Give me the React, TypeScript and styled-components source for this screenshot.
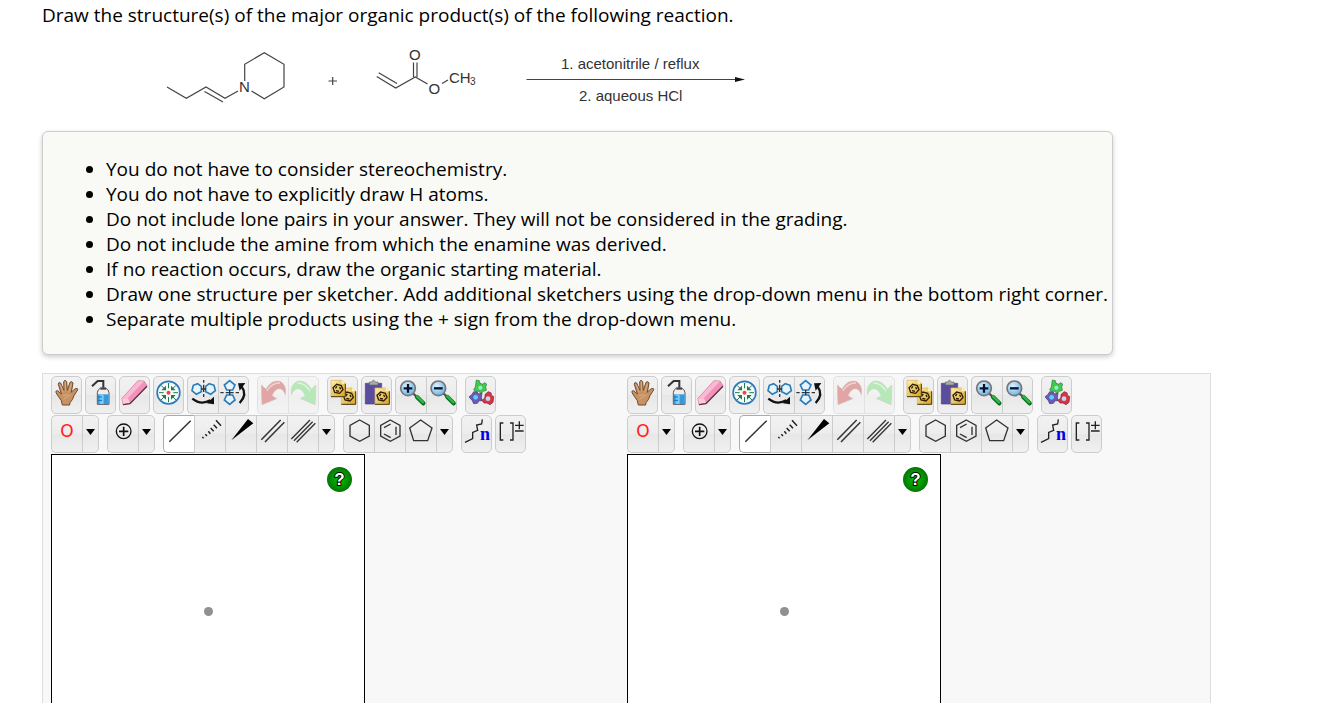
import React from "react";
import styled, { createGlobalStyle, css } from "styled-components";

const GlobalStyle = createGlobalStyle`
  *, *::before, *::after { box-sizing: border-box; }
  body { margin: 0; background: #fff; color: #000; font: 19px/25px "Open Sans", sans-serif; }
`;

const Page = styled.main`
  padding: 3px 112px 0 42px;
`;

const Prompt = styled.p`
  margin: 0;
`;

const Reaction = styled.figure`
  margin: 16px 0 23px 118px;

  svg {
    display: block;
    max-width: 100%;
  }
`;

const Notes = styled.ul`
  width: fit-content;
  max-width: 100%;
  margin: 0 0 18px;
  padding: 25px 4px 22px 63px;
  border: 1px solid #ccc;
  border-radius: 6px;
  background: #f9faf5;
  box-shadow: 0 2px 5px rgba(0, 0, 0, 0.2);
`;

const Workspace = styled.section`
  display: grid;
  grid-template-columns: repeat(2, 1fr);
  padding: 2px 7px 8px 8px;
  border: 1px solid #ddd;
  background: #f8f8f8;
`;

const Sketcher = styled.div`
  min-width: 0;
`;

const Toolbar = styled.div`
  display: flex;
  margin-bottom: 1px;
`;

const Group = styled.div<{ $spaced?: boolean; $disabled?: boolean }>`
  display: flex;
  flex: none;
  height: 38px;
  margin-right: ${(p) => (p.$spaced ? 8 : 3)}px;
  opacity: ${(p) => (p.$disabled ? 0.5 : 1)};
`;

const Tool = styled.button<{ $active?: boolean; $narrow?: boolean }>`
  display: flex;
  justify-content: center;
  flex: none;
  width: ${(p) => (p.$narrow ? 17 : 31)}px;
  height: 38px;
  padding: 3px 0 0;
  border: 1px solid #ccc;
  border-right-width: 0;
  background: linear-gradient(#f2f2f2, #ececec 50%, #e7e7e7 51%, #f0f0f0);
  color: #000;

  &:first-child {
    border-radius: 5px 0 0 5px;
  }
  &:last-child {
    border-right-width: 1px;
    border-radius: 0 5px 5px 0;
  }
  &:only-child {
    border-radius: 5px;
  }
  ${(p) =>
    p.$active &&
    css`
      background: #fff;
      border-color: #aaa;
    `}

  svg {
    display: block;
    flex: none;
  }
`;

const ElementSymbol = styled.span`
  color: #f22;
  font: 17px/25px "DejaVu Sans", sans-serif;
`;

const Canvas = styled.div`
  position: relative;
  display: flex;
  align-items: center;
  justify-content: center;
  width: 314px;
  max-width: 100%;
  aspect-ratio: 1;
  border: 1px solid #000;
  background: #fff;
`;

const Atom = styled.span`
  width: 9px;
  height: 9px;
  border-radius: 50%;
  background: #909090;
`;

const Help = styled.button`
  position: absolute;
  top: 12px;
  right: 12px;
  padding: 0;
  border: 0;
  background: none;

  svg {
    display: block;
  }
`;

function Icon({ x, y = 15, children }: { x: number; y?: number; children: React.ReactNode }) {
  return (
    <svg width="25" height="25" viewBox={`${x} ${y} 75 75`} fill="none" aria-hidden="true" overflow="visible">
      {children}
    </svg>
  );
}

const Caret = () => (
  <svg width="9" height="25" viewBox="0 0 9 25" aria-hidden="true">
    <path d="M0 10h9l-4.5 6z" fill="#000" />
  </svg>
);

const GoldPage = ({ x, y }: { x: number; y: number }) => (
  <g transform={`translate(${x} ${y})`}>
    <path d="M2 2H34L45 12V51H2Z" fill="url(#gold)" stroke="#d8b65a" strokeWidth="2" />
    <path d="M34 2V12H45Z" fill="#fff6c8" />
    <path d="M45 12V51H2" stroke="#4a3a10" strokeWidth="3" />
    <path d="M8 24L19 14L33 18L38 30L28 41L13 38Z" stroke="#2b2000" strokeWidth="4" />
    <path d="M15 26L20 20M28 22L31 29M26 35L17 33" stroke="#2b2000" strokeWidth="4" />
  </g>
);

const Lens = ({ cx }: { cx: number }) => (
  <>
    <path d={`M${cx + 15} 55L${cx + 27} 66`} stroke="#555" strokeWidth="7" />
    <path d={`M${cx + 27} 66L${cx + 46} 85`} stroke="#0c6b20" strokeWidth="13" strokeLinecap="round" />
    <path d={`M${cx + 27} 64L${cx + 45} 82`} stroke="#35b54a" strokeWidth="7" strokeLinecap="round" />
    <circle cx={cx} cy="40" r="22" fill="url(#lens)" stroke="#777" strokeWidth="5" />
  </>
);

const hand = (
  <Icon x={9}>
    <path
      d="M34 90L31 77Q23 66 15 53Q13 46 20 47L31 57L22 28Q22 20 29 24L39 47L38 20Q42 12 47 20L49 46L57 22Q63 17 66 24L61 52L71 42Q79 38 81 43L69 62Q65 75 57 83L56 90Z"
      fill="#c69264" stroke="#6e4a2b" strokeWidth="3" strokeLinejoin="round"
    />
    <path d="M36 62Q46 56 58 62M38 73Q45 64 52 66M28 29L37 51M43 20V49M61 26L54 49" stroke="#dcae84" strokeWidth="3" />
  </Icon>
);

const bottle = (
  <Icon x={112}>
    <path d="M124 34L141 18H158V38" stroke="#333" strokeWidth="6" />
    <path d="M149 39H165Q175 45 175 53V88H140V53Q140 45 149 39Z" fill="#f3eaea" stroke="#555" strokeWidth="3" />
    <path d="M141 58H174V87H141Z" fill="#2f9be0" />
    <path d="M147 58H159V87H147Z" fill="#7cc8f5" />
    <path d="M141 66H154M141 76H154" stroke="#1668ad" strokeWidth="3" />
    <path d="M149 38H166V44H149Z" fill="#444" />
  </Icon>
);

const eraser = (
  <Icon x={214}>
    <path d="M214 70L262 17L280 18L289 32L238 84L217 89Z" fill="#f291bb" stroke="#c27298" strokeWidth="2" />
    <path d="M216 69L263 18L280 19L232 69Z" fill="#fbb9d5" />
    <path d="M215 70L232 70L238 84L217 88Z" fill="#ffc9de" />
    <path d="M217 89L238 86L289 34" stroke="#5d2b43" strokeWidth="4" />
  </Icon>
);

const clean = (
  <Icon x={16}>
    <circle cx="53.5" cy="53" r="34" fill="#f4fafc" stroke="#2a7ab5" strokeWidth="5" />
    <path
      d="M53.5 24V40M53.5 82V66M25 53H39M82 53H68M31 31L45 45M76 31L62 45M31 75L45 61M76 75L62 61"
      stroke="#267a45" strokeWidth="3"
    />
    <path d="M46 32V46H32ZM61 32V46H75ZM46 74V60H32ZM61 74V60H75Z" fill="#267a45" />
    <circle cx="53.5" cy="53" r="6" fill="#f04444" />
  </Icon>
);

const flipHorizontal = (
  <Icon x={120}>
    <path d="M151 34V50L136 58L123 47L127 31L140 26Z M164 34V50L179 58L193 47L189 31L175 26Z" fill="#e8f4fc" stroke="#2b7cb9" strokeWidth="5" />
    <path d="M158 15V23M158 29V51M158 57V66M151 42H165" stroke="#333" strokeWidth="4" />
    <path d="M124 71Q150 92 178 76" stroke="#111" strokeWidth="7" />
    <path d="M189 65V88L167 85Z" fill="#111" />
  </Icon>
);

const flipVertical = (
  <Icon x={212}>
    <path d="M229 45H247L254 30L238 17L222 30Z M229 60H247L254 75L238 88L222 75Z" fill="#e8f4fc" stroke="#2b7cb9" strokeWidth="5" />
    <path d="M210 53H220M226 53H250M256 53H266M238 45V60" stroke="#333" strokeWidth="4" />
    <path d="M268 84Q292 59 274 35" stroke="#111" strokeWidth="7" />
    <path d="M263 25L285 24L268 47Z" fill="#111" />
  </Icon>
);

const undo = (
  <Icon x={33} y={30}>
    <path d="M34 45L48 58Q64 29 90 34Q111 44 106 74Q98 52 82 57Q71 63 66 77L80 86L36 104Z" fill="#c95452" stroke="#b98080" strokeWidth="2" />
    <path d="M50 63Q66 38 90 39" stroke="#eab0a8" strokeWidth="4" />
  </Icon>
);

const redo = (
  <Icon x={127} y={30}>
    <path d="M202 45L188 58Q172 29 146 34Q125 44 128 74Q138 52 154 57Q165 63 170 77L156 86L199 104Z" fill="#78d978" stroke="#8fba8f" strokeWidth="2" />
    <path d="M184 63Q168 38 146 39" stroke="#c4f4c0" strokeWidth="4" />
  </Icon>
);

const copy = (
  <Icon x={16}>
    <defs>
      <linearGradient id="gold" x1="0" y1="0" x2="1" y2="1">
        <stop stopColor="#fff0b0" />
        <stop offset="1" stopColor="#d9a020" />
      </linearGradient>
      <radialGradient id="lens" cx=".4" cy=".35" r=".7">
        <stop stopColor="#e0f4ff" />
        <stop offset="1" stopColor="#66aee6" />
      </radialGradient>
    </defs>
    <GoldPage x={48} y={37} />
    <GoldPage x={17} y={14} />
  </Icon>
);

const paste = (
  <Icon x={118}>
    <path d="M122 25H171V87H122Z" fill="#5b4d9e" stroke="#4a4088" strokeWidth="2" />
    <path d="M134 30V21H141Q146 10 152 21H160V30Z" fill="#aaa" stroke="#666" strokeWidth="2" />
    <GoldPage x={149} y={37} />
  </Icon>
);

const zoomIn = (
  <Icon x={220}>
    <Lens cx={247} />
    <path d="M247 27V53M234 40H260" stroke="#05162c" strokeWidth="7" />
  </Icon>
);

const zoomOut = (
  <Icon x={312}>
    <Lens cx={340} />
    <path d="M327 40H353" stroke="#05162c" strokeWidth="7" />
  </Icon>
);

const templates = (
  <Icon x={430}>
    <path d="M455 15L464 17L466 25L475 28L479 23L486 27L483 36L485 46L476 49L470 55L461 49L452 49L447 44L452 36Z" fill="#46c850" stroke="#1d7a31" strokeWidth="2" />
    <path d="M433 66L443 57L447 50L457 51L463 57L472 54L470 67L473 77L464 77L458 85L447 86L443 77Z" fill="#6a5cb4" stroke="#3f3480" strokeWidth="2" />
    <path d="M482 57L491 50L500 54L499 60L507 65L505 82L496 89L487 84L478 84L472 76L480 70Z" fill="#d93440" stroke="#861624" strokeWidth="2" />
    <circle cx="467" cy="38" r="6" fill="#8ff0d8" />
    <circle cx="453" cy="67" r="7" fill="#65caff" />
    <circle cx="490" cy="71" r="7" fill="#b9dcf5" />
  </Icon>
);

const charge = (
  <Icon x={214} y={149}>
    <circle cx="252" cy="186" r="22" stroke="#111" strokeWidth="4" />
    <path d="M252 172V200M238 186H266" stroke="#111" strokeWidth="5" />
  </Icon>
);

const singleBond = (
  <Icon x={381} y={149}>
    <path d="M388 217L452 154" stroke="#333" strokeWidth="4.5" />
  </Icon>
);

const hashedBond = (
  <Icon x={476} y={149}>
    <path d="M489 203L493 207M498 195L503 200M507 186L513 193M514 176L523 186M523 166L533 177M530 153L545 169" stroke="#222" strokeWidth="4.5" />
  </Icon>
);

const wedgeBond = (
  <Icon x={567} y={149}>
    <path d="M574 213L624 149L640 162Z" fill="#000" />
  </Icon>
);

const doubleBond = (
  <Icon x={30} y={149}>
    <path d="M34 211L92 152M45 218L103 159" stroke="#333" strokeWidth="4.5" />
  </Icon>
);

const tripleBond = (
  <Icon x={122} y={149}>
    <path d="M123 209L179 152M131 214L187 157M139 219L195 162" stroke="#333" strokeWidth="4" />
  </Icon>
);

const hexagon = (
  <Icon x={291} y={149}>
    <path d="M329 152L358 168V200L329 216L300 200V168Z" stroke="#333" strokeWidth="4" />
  </Icon>
);

const benzene = (
  <Icon x={384} y={149}>
    <path d="M421 152L450 168V200L421 216L392 200V168Z M438 172V197M402 175L422 164M402 194L422 205" stroke="#333" strokeWidth="4" />
  </Icon>
);

const pentagon = (
  <Icon x={476} y={149}>
    <path d="M511 152L545 176L532 214H490L478 176Z" stroke="#333" strokeWidth="4" />
  </Icon>
);

const chain = (
  <Icon x={642} y={149}>
    <path d="M697 150L695 164L680 167L683 183L668 189V208L645 219" stroke="#222" strokeWidth="4" />
    <text x="690" y="213" fill="#0000e8" fontFamily="Liberation Serif, serif" fontWeight="700" fontSize="54">n</text>
  </Icon>
);

const bracket = (
  <Icon x={746} y={149}>
    <path d="M762 161H753V212H762M782 161H791V212H782" stroke="#222" strokeWidth="4" />
    <path d="M810 156V180M797 168H823M797 185H823" stroke="#222" strokeWidth="4" />
  </Icon>
);

type ToolSpec = { label: string; icon?: React.ReactNode; narrow?: boolean; active?: boolean };
type GroupSpec = { tools: ToolSpec[]; spaced?: boolean; disabled?: boolean };

const menu = (label: string): ToolSpec => ({ label, icon: <Caret />, narrow: true });

const topGroups: GroupSpec[] = [
  { tools: [{ label: "Move", icon: hand }] },
  { tools: [{ label: "Clear", icon: bottle }] },
  { tools: [{ label: "Erase", icon: eraser }] },
  { tools: [{ label: "Clean structure", icon: clean }] },
  { spaced: true, tools: [{ label: "Flip horizontally", icon: flipHorizontal }, { label: "Flip vertically", icon: flipVertical }] },
  { spaced: true, disabled: true, tools: [{ label: "Undo", icon: undo }, { label: "Redo", icon: redo }] },
  { tools: [{ label: "Copy", icon: copy }] },
  { tools: [{ label: "Paste", icon: paste }] },
  { spaced: true, tools: [{ label: "Zoom in", icon: zoomIn }, { label: "Zoom out", icon: zoomOut }] },
  { tools: [{ label: "Templates", icon: templates }] },
];

const bottomGroups: GroupSpec[] = [
  { spaced: true, tools: [{ label: "Oxygen", icon: <ElementSymbol>O</ElementSymbol> }, menu("More elements")] },
  { spaced: true, tools: [{ label: "Charge", icon: charge }, menu("More charges")] },
  {
    spaced: true,
    tools: [
      { label: "Single bond", icon: singleBond, active: true },
      { label: "Hashed bond", icon: hashedBond },
      { label: "Wedge bond", icon: wedgeBond },
      { label: "Double bond", icon: doubleBond },
      { label: "Triple bond", icon: tripleBond },
      menu("More bonds"),
    ],
  },
  {
    spaced: true,
    tools: [
      { label: "Cyclohexane", icon: hexagon },
      { label: "Benzene", icon: benzene },
      { label: "Cyclopentane", icon: pentagon },
      menu("More rings"),
    ],
  },
  { tools: [{ label: "Chain", icon: chain }] },
  { tools: [{ label: "Brackets", icon: bracket }] },
];

function ToolRow({ label, groups }: { label: string; groups: GroupSpec[] }) {
  return (
    <Toolbar role="toolbar" aria-label={label}>
      {groups.map((group) => (
        <Group key={group.tools[0].label} $spaced={group.spaced} $disabled={group.disabled}>
          {group.tools.map((tool) => (
            <Tool
              key={tool.label}
              type="button"
              aria-label={tool.label}
              disabled={group.disabled}
              $narrow={tool.narrow}
              $active={tool.active}
            >
              {tool.icon}
            </Tool>
          ))}
        </Group>
      ))}
    </Toolbar>
  );
}

function SketcherPanel() {
  return (
    <Sketcher>
      <ToolRow label="Editing tools" groups={topGroups} />
      <ToolRow label="Drawing tools" groups={bottomGroups} />
      <Canvas>
        <Help type="button" aria-label="Help">
          <svg width="25" height="25" viewBox="0 0 25 25" aria-hidden="true">
            <defs>
              <radialGradient id="help">
                <stop stopColor="#00c800" />
                <stop offset="1" stopColor="#057505" />
              </radialGradient>
            </defs>
            <circle cx="12.5" cy="12.5" r="12.5" fill="url(#help)" />
            <text
              x="12.5" y="18" textAnchor="middle" fontFamily="Liberation Sans, sans-serif" fontWeight="700"
              fontSize="17" fill="#fff" stroke="#000" strokeWidth="2" paintOrder="stroke"
            >
              ?
            </text>
          </svg>
        </Help>
        <Atom />
      </Canvas>
    </Sketcher>
  );
}

function ReactionScheme() {
  return (
    <Reaction>
      <svg width="590" height="64" viewBox="160 44 590 64" role="img" aria-label="Reaction scheme">
        <g fill="none" stroke="#444" strokeWidth="1.2">
          <path d="M167 87L186.3 98.3L206 87L225 98.3L238 91M204.5 91.5L223 102" />
          <path d="M244.7 81V64.3L264.3 52.7L284 64.3V87L264.3 98.7L251.5 91" />
          <path d="M328.5 81H337M332.7 77V85" />
          <path d="M376.7 76.5L395.7 88L415.3 77L427.5 84M378.7 72.7L397 83.5M413.5 77V62.5M417 77V62.5M442 83.5L448 80" />
          <path d="M526.5 79.5H737" />
        </g>
        <path d="M735 77L745 79.5L735 82Z" fill="#111" />
        <g fill="#333" fontFamily="Liberation Sans, sans-serif" fontSize="15">
          <text x="239" y="92">N</text>
          <text x="409" y="60">O</text>
          <text x="428.5" y="94">O</text>
          <text x="449" y="83">CH</text>
          <text x="470" y="85" fontSize="10">3</text>
          <text x="561" y="69">1. acetonitrile / reflux</text>
          <text x="579" y="101">2. aqueous HCl</text>
        </g>
      </svg>
    </Reaction>
  );
}

const notes = [
  "You do not have to consider stereochemistry.",
  "You do not have to explicitly draw H atoms.",
  "Do not include lone pairs in your answer. They will not be considered in the grading.",
  "Do not include the amine from which the enamine was derived.",
  "If no reaction occurs, draw the organic starting material.",
  "Draw one structure per sketcher. Add additional sketchers using the drop-down menu in the bottom right corner.",
  "Separate multiple products using the + sign from the drop-down menu.",
];

export default function App() {
  return (
    <Page>
      <GlobalStyle />
      <Prompt>Draw the structure(s) of the major organic product(s) of the following reaction.</Prompt>
      <ReactionScheme />
      <Notes>
        {notes.map((note) => (
          <li key={note}>{note}</li>
        ))}
      </Notes>
      <Workspace>
        <SketcherPanel />
        <SketcherPanel />
      </Workspace>
    </Page>
  );
}
